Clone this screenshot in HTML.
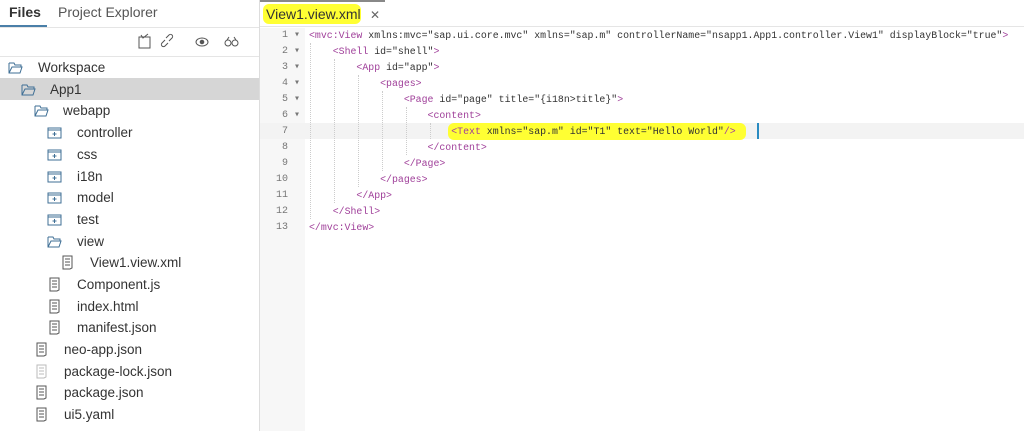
<!DOCTYPE html><html><head><meta charset="utf-8"><style>
*{margin:0;padding:0;box-sizing:border-box}
body{width:1024px;height:431px;background:#fff;font-family:"Liberation Sans",sans-serif;color:#333;position:relative;overflow:hidden}
.a{position:absolute;white-space:pre}
.t{font-size:13.5px;line-height:16px}
.code{font-family:"Liberation Mono",monospace;font-size:9.9px;line-height:16px;color:#333}
.tg{color:#a0409a}.ln{color:#777;font-family:"Liberation Mono",monospace;font-size:10px;line-height:16px;height:16px;text-align:right;width:38px}
.gd{position:absolute;width:0;border-left:1px dotted #ccc}
</style></head><body>
<div class="a" style="left:259px;top:0;width:1px;height:431px;background:#ddd"></div>
<div class="a t" style="left:9px;top:4px;font-weight:bold;font-size:14px">Files</div>
<div class="a t" style="left:58px;top:4px;color:#555;font-size:14px">Project Explorer</div>
<div class="a" style="left:0;top:25px;width:47px;height:2px;background:#4a7fa8"></div>
<div class="a" style="left:0;top:27px;width:259px;height:1px;background:#e5e5e5"></div>
<svg class="a" style="left:135px;top:32px" width="115" height="20" fill="none" stroke="#555" stroke-width="1">
<rect x="4" y="5" width="11" height="11"/><path d="M6 3l2 3 5-4"/>
<path d="M33 11l-3 3a2 2 0 0 1-3-3l3-3M34 9l3-3a2 2 0 0 0-3-3l-3 3"/>
<ellipse cx="67" cy="10" rx="6" ry="4"/><circle cx="67" cy="10" r="1.8" fill="#555"/>
<circle cx="93" cy="11" r="3"/><circle cx="100" cy="11" r="3"/><path d="M92 8l2-3M101 8l-2-3"/>
</svg>
<div class="a" style="left:0;top:56px;width:259px;height:1px;background:#e5e5e5"></div>
<div class="a" style="left:0;top:78px;width:259px;height:22px;background:#d6d6d6"></div>
<svg width="0" height="0" style="position:absolute"><defs>
<g id="fo" fill="none" stroke="#3f6f95" stroke-width="1"><path d="M1 3h5l1 2h6v2M1 3v10h11l2-6H4l-3 6"/></g>
<g id="fc" fill="none" stroke="#3f6f95" stroke-width="1"><rect x="1" y="3" width="13" height="10"/><path d="M1 5h13M7.5 7v4M5.5 9h4"/></g>
<g id="fi" fill="none" stroke="#555" stroke-width="1"><path d="M2 1h9v12l-2 1H2z"/><path d="M4 4h5M4 7h5M4 10h5"/></g>
<g id="fl" fill="none" stroke="#bbb" stroke-width="1"><path d="M2 1h9v12l-2 1H2z"/><path d="M4 4h5M4 7h5M4 10h5"/></g>
</defs></svg>
<svg class="a" style="left:8px;top:60px" width="16" height="15"><use href="#fo"/></svg><div class="a t" style="left:38px;top:60px">Workspace</div>
<svg class="a" style="left:21px;top:82px" width="16" height="15"><use href="#fo"/></svg><div class="a t" style="left:50px;top:82px">App1</div>
<svg class="a" style="left:34px;top:103px" width="16" height="15"><use href="#fo"/></svg><div class="a t" style="left:63px;top:103px">webapp</div>
<svg class="a" style="left:47px;top:125px" width="16" height="15"><use href="#fc"/></svg><div class="a t" style="left:77px;top:125px">controller</div>
<svg class="a" style="left:47px;top:147px" width="16" height="15"><use href="#fc"/></svg><div class="a t" style="left:77px;top:147px">css</div>
<svg class="a" style="left:47px;top:169px" width="16" height="15"><use href="#fc"/></svg><div class="a t" style="left:77px;top:169px">i18n</div>
<svg class="a" style="left:47px;top:190px" width="16" height="15"><use href="#fc"/></svg><div class="a t" style="left:77px;top:190px">model</div>
<svg class="a" style="left:47px;top:212px" width="16" height="15"><use href="#fc"/></svg><div class="a t" style="left:77px;top:212px">test</div>
<svg class="a" style="left:47px;top:234px" width="16" height="15"><use href="#fo"/></svg><div class="a t" style="left:77px;top:234px">view</div>
<svg class="a" style="left:61px;top:255px" width="16" height="15"><use href="#fi"/></svg><div class="a t" style="left:90px;top:255px">View1.view.xml</div>
<svg class="a" style="left:48px;top:277px" width="16" height="15"><use href="#fi"/></svg><div class="a t" style="left:77px;top:277px">Component.js</div>
<svg class="a" style="left:48px;top:299px" width="16" height="15"><use href="#fi"/></svg><div class="a t" style="left:77px;top:299px">index.html</div>
<svg class="a" style="left:48px;top:320px" width="16" height="15"><use href="#fi"/></svg><div class="a t" style="left:77px;top:320px">manifest.json</div>
<svg class="a" style="left:35px;top:342px" width="16" height="15"><use href="#fi"/></svg><div class="a t" style="left:64px;top:342px">neo-app.json</div>
<svg class="a" style="left:35px;top:364px" width="16" height="15"><use href="#fl"/></svg><div class="a t" style="left:64px;top:364px">package-lock.json</div>
<svg class="a" style="left:35px;top:385px" width="16" height="15"><use href="#fi"/></svg><div class="a t" style="left:64px;top:385px">package.json</div>
<svg class="a" style="left:35px;top:407px" width="16" height="15"><use href="#fi"/></svg><div class="a t" style="left:64px;top:407px">ui5.yaml</div>
<div class="a" style="left:260px;top:0;width:764px;height:27px;background:#fff;border-bottom:1px solid #e5e5e5"></div>
<div class="a" style="left:260px;top:0;width:125px;height:2px;background:#888"></div>
<div class="a" style="left:263px;top:4px;width:98px;height:20px;background:#ffff33;border-radius:6px"></div>
<div class="a t" style="left:266px;top:6px;font-size:14px">View1.view.xml</div>
<div class="a t" style="left:370px;top:7px;color:#666;font-size:12px">✕</div>
<div class="a" style="left:260px;top:28px;width:45px;height:403px;background:#f7f7f7"></div>
<div class="a" style="left:260px;top:123px;width:764px;height:16px;background:#f3f3f3"></div>
<div class="a" style="left:448px;top:123px;width:298px;height:17px;background:#ffff33;border-radius:6px"></div>
<div class="a" style="left:757px;top:123px;width:2px;height:16px;background:#2a8bc1"></div>
<div class="gd" style="left:310px;top:43px;height:176px"></div>
<div class="gd" style="left:334px;top:59px;height:144px"></div>
<div class="gd" style="left:358px;top:75px;height:112px"></div>
<div class="gd" style="left:382px;top:91px;height:80px"></div>
<div class="gd" style="left:406px;top:107px;height:48px"></div>
<div class="gd" style="left:430px;top:123px;height:16px"></div>
<div style="position:absolute;left:262px;top:28px;line-height:16px;white-space:normal"><div class="ln">1 ▾</div><div class="ln">2 ▾</div><div class="ln">3 ▾</div><div class="ln">4 ▾</div><div class="ln">5 ▾</div><div class="ln">6 ▾</div><div class="ln">7&nbsp;&nbsp;</div><div class="ln">8&nbsp;&nbsp;</div><div class="ln">9&nbsp;&nbsp;</div><div class="ln">10&nbsp;&nbsp;</div><div class="ln">11&nbsp;&nbsp;</div><div class="ln">12&nbsp;&nbsp;</div><div class="ln">13&nbsp;&nbsp;</div></div>
<div class="a code" style="left:309px;top:28px"><span class="tg">&lt;mvc:View</span> xmlns:mvc="sap.ui.core.mvc" xmlns="sap.m" controllerName="nsapp1.App1.controller.View1" displayBlock="true"<span class="tg">&gt;</span>
    <span class="tg">&lt;Shell</span> id="shell"<span class="tg">&gt;</span>
        <span class="tg">&lt;App</span> id="app"<span class="tg">&gt;</span>
            <span class="tg">&lt;pages&gt;</span>
                <span class="tg">&lt;Page</span> id="page" title="{i18n&gt;title}"<span class="tg">&gt;</span>
                    <span class="tg">&lt;content&gt;</span>
                        <span class="tg">&lt;Text</span> xmlns="sap.m" id="T1" text="Hello World"<span class="tg">/&gt;</span>
                    <span class="tg">&lt;/content&gt;</span>
                <span class="tg">&lt;/Page&gt;</span>
            <span class="tg">&lt;/pages&gt;</span>
        <span class="tg">&lt;/App&gt;</span>
    <span class="tg">&lt;/Shell&gt;</span>
<span class="tg">&lt;/mvc:View&gt;</span></div>
</body></html>
